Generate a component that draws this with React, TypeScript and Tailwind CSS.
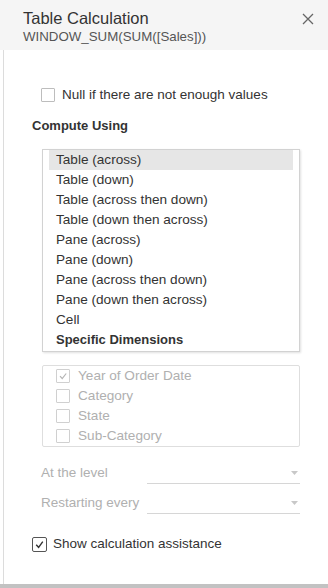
import React from "react";

const items = [
  "Table (across)",
  "Table (down)",
  "Table (across then down)",
  "Table (down then across)",
  "Pane (across)",
  "Pane (down)",
  "Pane (across then down)",
  "Pane (down then across)",
  "Cell",
];

const dims = [
  { label: "Year of Order Date", checked: true },
  { label: "Category", checked: false },
  { label: "State", checked: false },
  { label: "Sub-Category", checked: false },
];

function Caret() {
  return (
    <svg width="7" height="4" viewBox="0 0 7 4" className="absolute right-[2px] top-[9px]">
      <path d="M0 0 L7 0 L3.5 4 Z" fill="#c8c8c8" />
    </svg>
  );
}

export default function App() {
  return (
    <div
      className="w-[328px] h-[588px] bg-white flex flex-col overflow-hidden text-[#333]"
      style={{ fontFamily: '"Liberation Sans", Arial, sans-serif' }}
    >
      <div className="h-[50px] bg-[#f5f5f5] flex justify-between pl-[23px] pr-[14px] pt-[8px] shrink-0">
        <div className="flex flex-col">
          <div className="text-[16.5px] leading-[20px] text-[#333]">Table Calculation</div>
          <div className="text-[13.3px] leading-[15px] text-[#555] mt-[1px]">WINDOW_SUM(SUM([Sales]))</div>
        </div>
        <svg width="12" height="12" viewBox="0 0 12 12" className="mt-[5px]">
          <path d="M1 1 L11 11 M11 1 L1 11" stroke="#666" strokeWidth="1.3" />
        </svg>
      </div>
      <div className="flex-1 ml-[3px] border-l border-[#dcdcdc] flex flex-col">
        <div className="mt-[35px] pl-[37px] h-[20px] flex items-center gap-[7px]">
          <div className="w-[14px] h-[14px] border border-[#bdbdbd] rounded-[1px] bg-white" />
          <span className="text-[13.5px]">Null if there are not enough values</span>
        </div>
        <div className="mt-[11px] pl-[28px] h-[20px] flex items-center text-[13px] font-bold">Compute Using</div>
        <div className="mt-[13px] ml-[38px] w-[258px] border border-[#d2d2d2] shadow-[1px_1px_2px_rgba(0,0,0,0.12)] px-[6px] pb-[1px]">
          {items.map((t, i) => (
            <div
              key={t}
              className={`h-[20px] flex items-center pl-[7px] text-[13.6px] text-[#333] ${i === 0 ? "bg-[#e6e6e6]" : ""}`}
            >
              {t}
            </div>
          ))}
          <div className="h-[20px] flex items-center pl-[7px] text-[13px] font-bold text-[#333]">Specific Dimensions</div>
        </div>
        <div className="mt-[13px] ml-[38px] w-[258px] h-[82px] border border-[#dedede] rounded-[2px] pl-[13px]">
          {dims.map((d) => (
            <div key={d.label} className="h-[20px] flex items-center gap-[8px]">
              <div className="w-[14px] h-[14px] border border-[#d0d0d0] rounded-[1px] flex items-center justify-center">
                {d.checked && (
                  <svg width="10" height="10" viewBox="0 0 10 10">
                    <path d="M2 5.2 L4.2 7.5 L8.2 2.5" fill="none" stroke="#b5b5b5" strokeWidth="1.2" />
                  </svg>
                )}
              </div>
              <span className="text-[13.6px] text-[#b0b0b0]">{d.label}</span>
            </div>
          ))}
        </div>
        <div className="mt-[15px] pl-[37px] h-[22px] flex items-center">
          <span className="w-[106px] text-[13.5px] text-[#b0b0b0]">At the level</span>
          <div className="relative w-[153px] h-full border-b border-[#d6d6d6]">
            <Caret />
          </div>
        </div>
        <div className="mt-[8px] pl-[37px] h-[22px] flex items-center">
          <span className="w-[106px] text-[13.5px] text-[#b0b0b0]">Restarting every</span>
          <div className="relative w-[153px] h-full border-b border-[#d6d6d6]">
            <Caret />
          </div>
        </div>
        <div className="mt-[20px] pl-[28px] h-[20px] flex items-center gap-[6px]">
          <div className="w-[15px] h-[15px] border border-[#555] rounded-[2px] flex items-center justify-center bg-white">
            <svg width="11" height="11" viewBox="0 0 11 11">
              <path d="M2.2 5.8 L4.6 8.3 L8.8 2.6" fill="none" stroke="#333" strokeWidth="1.4" />
            </svg>
          </div>
          <span className="text-[13.5px] text-[#333]">Show calculation assistance</span>
        </div>
      </div>
      <div className="h-[4px] bg-[#c2c2c2] shrink-0" />
    </div>
  );
}
